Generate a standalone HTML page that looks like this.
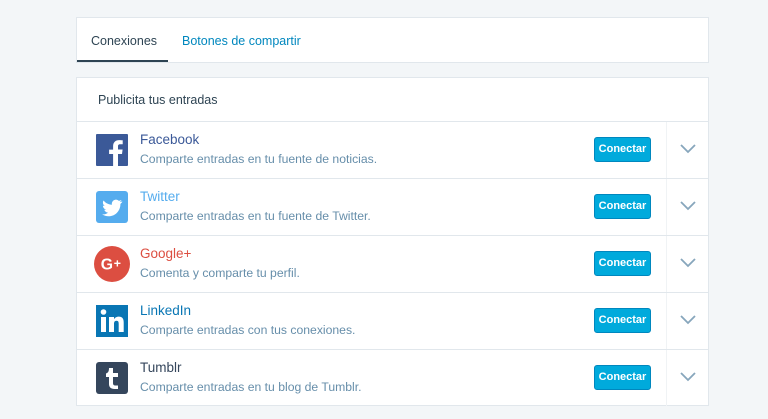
<!DOCTYPE html><html><head><style>
body{margin:0;background:#f3f6f8;font-family:"Liberation Sans",sans-serif;width:768px;height:419px;overflow:hidden;position:relative}
.card{position:absolute;left:76px;width:631px;background:#fff;border:1px solid #e1e7ec}
.tabs{top:17px;height:44px}
.tab{position:absolute;top:0;height:44px;line-height:46px;font-size:12.5px}
.sec{top:77px;height:327px}
.hd{height:43px;line-height:44px;padding-left:21px;font-size:12.5px;color:#2e4453;border-bottom:1px solid #e1e7ec}
.row{position:relative;height:56px;border-bottom:1px solid #e1e7ec}
.row:last-child{border-bottom:none}
.ic{position:absolute;left:19px;top:12px;width:32px;height:32px}
.t{position:absolute;left:63px;top:10px;font-size:13.5px}
.d{position:absolute;left:63px;top:30px;font-size:12.2px;color:#668eaa}
.b{position:absolute;left:517px;top:15px;width:57px;height:25px;background:#00aadc;border:1px solid #0087be;box-sizing:border-box;border-radius:3px;color:#fff;font-size:11px;font-weight:bold;text-align:center;line-height:23px}
.v{position:absolute;left:589px;top:0;width:42px;height:56px;border-left:1px solid #f0f3f5}
.v svg{position:absolute;left:13px;top:22px}
</style></head><body>
<div class="card tabs">
<div class="tab" style="left:14px;color:#2e4453">Conexiones</div>
<div style="position:absolute;left:0;top:42px;width:91px;height:2px;background:#2e4453"></div>
<div class="tab" style="left:105px;color:#0087be">Botones de compartir</div>
</div>
<div class="card sec">
<div class="hd">Publicita tus entradas</div>
<div class="row"><svg class="ic" viewBox="0 0 32 32"><rect width="32" height="32" rx="1" fill="#3b5998"/><path d="M22 32V20h4l.6-4.5H22v-3c0-1.3.4-2.2 2.2-2.2h2.5v-4c-.4 0-1.9-.2-3.6-.2-3.6 0-6 2.2-6 6.2v3.3h-4V20h4v12z" fill="#fff"/></svg><div class="t" style="color:#3b5998">Facebook</div><div class="d">Comparte entradas en tu fuente de noticias.</div><div class="b">Conectar</div><div class="v"><svg width="16" height="10"><path d="M1 1l7 7 7-7" stroke="#87a6bc" stroke-width="1.8" fill="none"/></svg></div></div>
<div class="row"><svg class="ic" viewBox="0 0 32 32"><rect width="32" height="32" rx="3" fill="#55acee"/><path d="M26 10.5c-.7.3-1.5.5-2.3.6.8-.5 1.5-1.3 1.8-2.2-.8.5-1.7.8-2.6 1-1.6-1.7-4.3-1.7-5.9 0-1 1-1.4 2.5-1.1 3.9-3.300-.2-6.3-1.7-8.4-4.3-1.1 1.9-.5 4.3 1.3 5.5-.7 0-1.3-.2-1.9-.5 0 2 1.4 3.7 3.3 4.1-.6.2-1.2.2-1.9.1.5 1.7 2.1 2.8 3.9 2.9-1.7 1.3-3.9 2-6.1 1.8 1.9 1.2 4.1 1.9 6.4 1.9 7.7 0 11.9-6.4 11.9-11.9v-.5c.8-.6 1.5-1.3 2-2.1z" fill="#fff"/></svg><div class="t" style="color:#55acee">Twitter</div><div class="d">Comparte entradas en tu fuente de Twitter.</div><div class="b">Conectar</div><div class="v"><svg width="16" height="10"><path d="M1 1l7 7 7-7" stroke="#87a6bc" stroke-width="1.8" fill="none"/></svg></div></div>
<div class="row"><svg class="ic" viewBox="0 0 32 32" style="left:17px;top:10px;width:36px;height:36px"><circle cx="16" cy="16" r="16" fill="#dc4e41"/><text x="6" y="21" font-family="Liberation Sans" font-weight="bold" font-size="14" fill="#fff">G</text><text x="17.5" y="19" font-family="Liberation Sans" font-weight="bold" font-size="11" fill="#fff">+</text></svg><div class="t" style="color:#dc4e41">Google+</div><div class="d">Comenta y comparte tu perfil.</div><div class="b">Conectar</div><div class="v"><svg width="16" height="10"><path d="M1 1l7 7 7-7" stroke="#87a6bc" stroke-width="1.8" fill="none"/></svg></div></div>
<div class="row"><svg class="ic" viewBox="0 0 32 32"><rect width="32" height="32" fill="#0976b4"/><rect x="5" y="12" width="5" height="15" fill="#fff"/><circle cx="7.5" cy="7" r="2.8" fill="#fff"/><path d="M13 12h5v2.2c.8-1.4 2.4-2.6 4.8-2.6 4 0 4.9 2.6 4.9 6V27h-5v-8c0-1.8-.3-3.2-2.2-3.2S18 17.2 18 19v8h-5z" fill="#fff"/></svg><div class="t" style="color:#0976b4">LinkedIn</div><div class="d">Comparte entradas con tus conexiones.</div><div class="b">Conectar</div><div class="v"><svg width="16" height="10"><path d="M1 1l7 7 7-7" stroke="#87a6bc" stroke-width="1.8" fill="none"/></svg></div></div>
<div class="row"><svg class="ic" viewBox="0 0 32 32"><rect width="32" height="32" rx="3" fill="#35465c"/><path d="M13 6h4v5h5v4h-5v6c0 2 1 2.5 2.5 2.5H22V27h-3.5c-3.5 0-5.5-1.8-5.5-5v-7h-3v-3.5c2.3-.7 3-2.5 3-5.5z" fill="#fff"/></svg><div class="t" style="color:#35465c">Tumblr</div><div class="d">Comparte entradas en tu blog de Tumblr.</div><div class="b">Conectar</div><div class="v"><svg width="16" height="10"><path d="M1 1l7 7 7-7" stroke="#87a6bc" stroke-width="1.8" fill="none"/></svg></div></div>
</div>
</body></html>
